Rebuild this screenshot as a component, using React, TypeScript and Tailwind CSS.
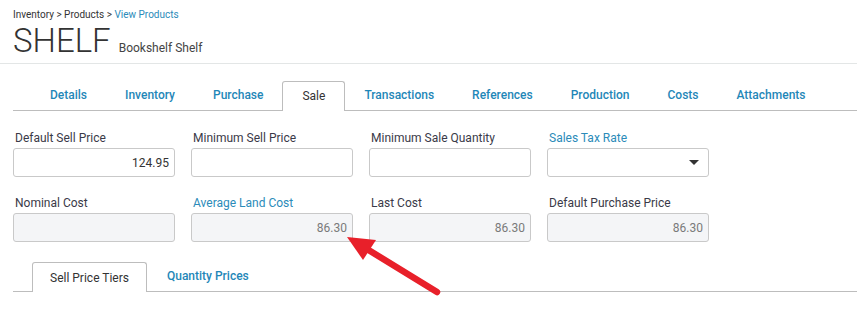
import React from "react";

const tabs = ["Details", "Inventory", "Purchase", "Sale", "Transactions", "References", "Production", "Costs", "Attachments"];

interface FieldProps {
    label: string;
    value?: string;
    disabled?: boolean;
    link?: boolean;
    select?: boolean;
}

function Field({ label, value, disabled, link, select }: FieldProps) {
    return (
        <div className="w-[162px] flex flex-col">
            <div className={`pl-[2px] text-[12px] leading-[16px] mb-[2px] ${link ? "text-[#2b8bb9]" : "text-[#3a3a48]"}`}>
                {label}
            </div>
            <div
                className={`h-[29px] rounded-[3px] border border-[#c9c9c9] flex items-center justify-end pr-[5px] text-[12px] ${disabled ? "bg-[#f4f5f7] text-[#7a7a7a]" : "bg-white text-[#333]"}`}
            >
                {select ? (
                    <span className="mr-[4px] w-0 h-0 border-l-[5px] border-r-[5px] border-t-[5px] border-l-transparent border-r-transparent border-t-[#333]" />
                ) : (
                    value
                )}
            </div>
        </div>
    );
}

export default function App() {
    return (
        <div className="relative w-[857px] h-[318px] bg-white overflow-hidden font-['Roboto',sans-serif]">
            {/* Header */}
            <div className="pl-[13px] pt-[9px] pb-[6px] border-b border-[#e3e6e6]">
                <div className="text-[10px] leading-[12px] text-[#333]">
                    Inventory &gt; Products &gt; <span className="text-[#2b8bb9]">View Products</span>
                </div>
                <div className="mt-[3px] flex items-baseline gap-[8px]">
                    <span className="text-[33px] leading-[33px] font-light text-[#333]">SHELF</span>
                    <span className="text-[12px] text-[#444]">Bookshelf Shelf</span>
                </div>
            </div>

            {/* Main tabs */}
            <div className="ml-[13px] mt-[17px] pl-[18px] flex items-end border-b border-[#bdbdbd] h-[30px]">
                {tabs.map((t) => {
                    const active = t === "Sale";
                    return (
                        <div
                            key={t}
                            className={`h-[30px] px-[19px] pb-[2px] flex items-center text-[12px] font-medium -mb-px ${active
                                ? "bg-white border border-b-0 border-[#bdbdbd] rounded-t-[3px] text-[#333] font-normal"
                                : "text-[#1f87b8]"
                                }`}
                        >
                            {t}
                        </div>
                    );
                })}
            </div>

            {/* Fields */}
            <div className="ml-[13px] mt-[19px] flex gap-[16px]">
                <Field label="Default Sell Price" value="124.95" />
                <Field label="Minimum Sell Price" />
                <Field label="Minimum Sale Quantity" />
                <Field label="Sales Tax Rate" link select />
            </div>
            <div className="ml-[13px] mt-[18px] flex gap-[16px]">
                <Field label="Nominal Cost" disabled />
                <Field label="Average Land Cost" value="86.30" disabled link />
                <Field label="Last Cost" value="86.30" disabled />
                <Field label="Default Purchase Price" value="86.30" disabled />
            </div>

            {/* Sub tabs */}
            <div className="ml-[13px] mt-[20px] pl-[19px] flex items-end border-b border-[#bdbdbd] h-[30px]">
                <div className="h-[30px] px-[17px] -mb-px flex items-center bg-white border border-b-0 border-[#bdbdbd] rounded-t-[3px] text-[12px] text-[#333]">
                    Sell Price Tiers
                </div>
                <div className="h-[30px] px-[20px] flex items-center text-[12px] font-medium text-[#1f87b8]">
                    Quantity Prices
                </div>
            </div>

            {/* Annotation arrow */}
            <svg className="absolute inset-0 pointer-events-none" width="857" height="318" viewBox="0 0 857 318">
                <line x1="437" y1="292" x2="362" y2="246" stroke="#e8202a" strokeWidth="6.5" strokeLinecap="round" />
                <polygon points="347,237 376,240 363,260" fill="#e8202a" />
            </svg>
        </div>
    );
}
